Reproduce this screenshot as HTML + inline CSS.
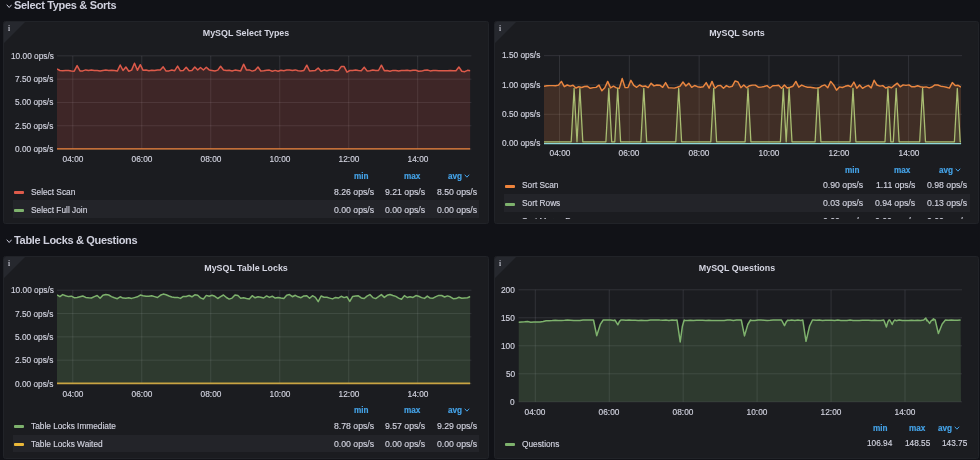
<!DOCTYPE html>
<html><head><meta charset="utf-8"><title>MySQL dashboard</title>
<style>
html,body{margin:0;padding:0}
body{width:980px;height:460px;background:#111217;overflow:hidden;position:relative;font-family:"Liberation Sans",Arial,sans-serif;color:#ccccdc}
.abs{position:absolute}
.t{position:absolute;white-space:nowrap;height:14px;line-height:14px;will-change:transform}
.panel{position:absolute;background:#1b1c20;border:1px solid #212328;border-radius:2.5px;box-sizing:border-box;overflow:hidden}
.corner{position:absolute;left:0;top:0;width:0;height:0;border-top:21.5px solid #26282e;border-right:21.5px solid transparent}
.ci{will-change:transform;position:absolute;left:4.3px;top:1.8px;font-family:"Liberation Serif",serif;font-weight:bold;font-size:7.6px;line-height:9px;color:#b9bac5}
.rtitle{font-size:11px;font-weight:bold;color:#d0d1de;letter-spacing:-0.32px}
.ptitle{font-size:8.9px;font-weight:bold;color:#d5d6e2}
.ax{font-size:8.3px;color:#d2d3df;-webkit-text-stroke:0.15px #d2d3df}
.lg{font-size:8.3px;color:#d2d3df;-webkit-text-stroke:0.15px #d2d3df}
.lv{font-size:8.7px;color:#d2d3df;-webkit-text-stroke:0.15px #d2d3df}
.lv2{font-size:8.25px;color:#d2d3df;-webkit-text-stroke:0.15px #d2d3df}
.lh{font-size:8.2px;font-weight:bold;color:#45a3e8;-webkit-text-stroke:0.15px #45a3e8}
</style></head><body>
<svg class="abs" style="left:5.6px;top:4.4px" width="6.4" height="4.5" viewBox="-1 -1 6.4 4.5"><path d="M0,0 L2.2,2.5 L4.4,0" fill="none" stroke="#ccccdc" stroke-width="1.0" stroke-linecap="round" stroke-linejoin="round"/></svg>
<div class="t rtitle" style="left:14.3px;top:-2.00px;">Select Types &amp; Sorts</div>
<svg class="abs" style="left:5.6px;top:238.6px" width="6.4" height="4.5" viewBox="-1 -1 6.4 4.5"><path d="M0,0 L2.2,2.5 L4.4,0" fill="none" stroke="#ccccdc" stroke-width="1.0" stroke-linecap="round" stroke-linejoin="round"/></svg>
<div class="t rtitle" style="left:14.3px;top:233.00px;">Table Locks &amp; Questions</div>
<div class="panel" style="left:3px;top:21px;width:486px;height:202.5px">
<div class="corner"></div><div class="ci">i</div>
</div>
<div class="t ptitle" style="left:146.00px;width:200px;top:26.00px;text-align:center;">MySQL Select Types</div>
<svg class="abs" style="left:0;top:0" width="980" height="460" viewBox="0 0 980 460">
<line x1="57" x2="471.4" y1="55.85" y2="55.85" stroke="rgba(204,204,220,0.13)" stroke-width="1"/>
<line x1="57" x2="471.4" y1="79.15" y2="79.15" stroke="rgba(204,204,220,0.13)" stroke-width="1"/>
<line x1="57" x2="471.4" y1="102.45" y2="102.45" stroke="rgba(204,204,220,0.13)" stroke-width="1"/>
<line x1="57" x2="471.4" y1="125.75" y2="125.75" stroke="rgba(204,204,220,0.13)" stroke-width="1"/>
<line x1="57" x2="471.4" y1="149.05" y2="149.05" stroke="rgba(204,204,220,0.13)" stroke-width="1"/>
<line x1="72.80" x2="72.80" y1="55.85" y2="149.05" stroke="rgba(204,204,220,0.13)" stroke-width="1"/>
<line x1="141.78" x2="141.78" y1="55.85" y2="149.05" stroke="rgba(204,204,220,0.13)" stroke-width="1"/>
<line x1="210.76" x2="210.76" y1="55.85" y2="149.05" stroke="rgba(204,204,220,0.13)" stroke-width="1"/>
<line x1="279.74" x2="279.74" y1="55.85" y2="149.05" stroke="rgba(204,204,220,0.13)" stroke-width="1"/>
<line x1="348.72" x2="348.72" y1="55.85" y2="149.05" stroke="rgba(204,204,220,0.13)" stroke-width="1"/>
<line x1="417.70" x2="417.70" y1="55.85" y2="149.05" stroke="rgba(204,204,220,0.13)" stroke-width="1"/>
<clipPath id="c321"><rect x="57" y="53.85" width="413.4" height="97.20000000000002"/></clipPath><g clip-path="url(#c321)">
<path d="M57.0,68.9 L59.9,70.5 L62.7,70.7 L65.6,70.4 L68.5,70.4 L71.4,71.1 L74.2,71.2 L77.1,65.6 L80.0,70.9 L82.8,70.9 L85.7,69.9 L88.6,70.6 L91.4,70.1 L94.3,70.6 L97.2,70.4 L100.1,71.0 L102.9,70.4 L105.8,70.1 L108.7,70.5 L111.5,70.3 L114.4,70.4 L117.3,71.1 L120.2,65.0 L123.0,70.5 L125.9,67.0 L128.8,71.2 L131.6,70.1 L134.5,63.2 L137.4,70.3 L140.3,64.7 L143.1,70.3 L146.0,70.0 L148.9,70.7 L151.7,70.2 L154.6,70.6 L157.5,70.0 L160.3,70.1 L163.2,66.8 L166.1,71.1 L169.0,70.9 L171.8,70.0 L174.7,70.7 L177.6,66.1 L180.4,70.8 L183.3,70.6 L186.2,67.2 L189.1,70.8 L191.9,70.5 L194.8,67.0 L197.7,70.0 L200.5,67.5 L203.4,70.0 L206.3,67.2 L209.2,69.9 L212.0,70.4 L214.9,71.0 L217.8,70.1 L220.6,66.3 L223.5,70.0 L226.4,70.5 L229.2,70.3 L232.1,71.0 L235.0,70.1 L237.9,70.5 L240.7,70.9 L243.6,64.2 L246.5,70.1 L249.3,69.9 L252.2,71.1 L255.1,70.2 L258.0,67.0 L260.8,71.0 L263.7,70.8 L266.6,70.2 L269.4,70.1 L272.3,71.2 L275.2,70.4 L278.1,71.2 L280.9,70.3 L283.8,70.8 L286.7,70.1 L289.5,69.9 L292.4,70.6 L295.3,69.9 L298.1,70.8 L301.0,71.1 L303.9,70.4 L306.8,65.2 L309.6,71.0 L312.5,70.7 L315.4,70.4 L318.2,68.0 L321.1,71.2 L324.0,70.1 L326.9,70.8 L329.7,70.0 L332.6,70.1 L335.5,70.7 L338.3,70.6 L341.2,66.6 L344.1,66.6 L347.0,72.1 L349.8,70.5 L352.7,70.4 L355.6,70.0 L358.4,70.6 L361.3,70.7 L364.2,67.2 L367.0,70.9 L369.9,70.8 L372.8,70.0 L375.7,70.5 L378.5,70.5 L381.4,65.2 L384.3,70.7 L387.1,70.5 L390.0,71.2 L392.9,70.4 L395.8,70.4 L398.6,71.1 L401.5,70.4 L404.4,70.6 L407.2,70.3 L410.1,70.8 L413.0,70.3 L415.9,70.3 L418.7,71.2 L421.6,71.1 L424.5,70.3 L427.3,70.0 L430.2,70.9 L433.1,70.6 L435.9,70.5 L438.8,70.8 L441.7,70.8 L444.6,70.8 L447.4,70.7 L450.3,70.5 L453.2,70.8 L456.0,70.7 L458.9,67.0 L461.8,71.2 L464.7,71.7 L467.5,70.3 L470.4,70.8 L470.4,149.05 L57,149.05 Z" fill="#dd5a4a" fill-opacity="0.18" stroke="none"/>
<path d="M57.0,68.9 L59.9,70.5 L62.7,70.7 L65.6,70.4 L68.5,70.4 L71.4,71.1 L74.2,71.2 L77.1,65.6 L80.0,70.9 L82.8,70.9 L85.7,69.9 L88.6,70.6 L91.4,70.1 L94.3,70.6 L97.2,70.4 L100.1,71.0 L102.9,70.4 L105.8,70.1 L108.7,70.5 L111.5,70.3 L114.4,70.4 L117.3,71.1 L120.2,65.0 L123.0,70.5 L125.9,67.0 L128.8,71.2 L131.6,70.1 L134.5,63.2 L137.4,70.3 L140.3,64.7 L143.1,70.3 L146.0,70.0 L148.9,70.7 L151.7,70.2 L154.6,70.6 L157.5,70.0 L160.3,70.1 L163.2,66.8 L166.1,71.1 L169.0,70.9 L171.8,70.0 L174.7,70.7 L177.6,66.1 L180.4,70.8 L183.3,70.6 L186.2,67.2 L189.1,70.8 L191.9,70.5 L194.8,67.0 L197.7,70.0 L200.5,67.5 L203.4,70.0 L206.3,67.2 L209.2,69.9 L212.0,70.4 L214.9,71.0 L217.8,70.1 L220.6,66.3 L223.5,70.0 L226.4,70.5 L229.2,70.3 L232.1,71.0 L235.0,70.1 L237.9,70.5 L240.7,70.9 L243.6,64.2 L246.5,70.1 L249.3,69.9 L252.2,71.1 L255.1,70.2 L258.0,67.0 L260.8,71.0 L263.7,70.8 L266.6,70.2 L269.4,70.1 L272.3,71.2 L275.2,70.4 L278.1,71.2 L280.9,70.3 L283.8,70.8 L286.7,70.1 L289.5,69.9 L292.4,70.6 L295.3,69.9 L298.1,70.8 L301.0,71.1 L303.9,70.4 L306.8,65.2 L309.6,71.0 L312.5,70.7 L315.4,70.4 L318.2,68.0 L321.1,71.2 L324.0,70.1 L326.9,70.8 L329.7,70.0 L332.6,70.1 L335.5,70.7 L338.3,70.6 L341.2,66.6 L344.1,66.6 L347.0,72.1 L349.8,70.5 L352.7,70.4 L355.6,70.0 L358.4,70.6 L361.3,70.7 L364.2,67.2 L367.0,70.9 L369.9,70.8 L372.8,70.0 L375.7,70.5 L378.5,70.5 L381.4,65.2 L384.3,70.7 L387.1,70.5 L390.0,71.2 L392.9,70.4 L395.8,70.4 L398.6,71.1 L401.5,70.4 L404.4,70.6 L407.2,70.3 L410.1,70.8 L413.0,70.3 L415.9,70.3 L418.7,71.2 L421.6,71.1 L424.5,70.3 L427.3,70.0 L430.2,70.9 L433.1,70.6 L435.9,70.5 L438.8,70.8 L441.7,70.8 L444.6,70.8 L447.4,70.7 L450.3,70.5 L453.2,70.8 L456.0,70.7 L458.9,67.0 L461.8,71.2 L464.7,71.7 L467.5,70.3 L470.4,70.8" fill="none" stroke="#dd5a4a" stroke-width="1.5" stroke-linejoin="round"/>
<path d="M57.0,148.9 L59.9,148.9 L62.7,148.9 L65.6,148.9 L68.5,148.9 L71.4,148.9 L74.2,148.9 L77.1,148.9 L80.0,148.9 L82.8,148.9 L85.7,148.9 L88.6,148.9 L91.4,148.9 L94.3,148.9 L97.2,148.9 L100.1,148.9 L102.9,148.9 L105.8,148.9 L108.7,148.9 L111.5,148.9 L114.4,148.9 L117.3,148.9 L120.2,148.9 L123.0,148.9 L125.9,148.9 L128.8,148.9 L131.6,148.9 L134.5,148.9 L137.4,148.9 L140.3,148.9 L143.1,148.9 L146.0,148.9 L148.9,148.9 L151.7,148.9 L154.6,148.9 L157.5,148.9 L160.3,148.9 L163.2,148.9 L166.1,148.9 L169.0,148.9 L171.8,148.9 L174.7,148.9 L177.6,148.9 L180.4,148.9 L183.3,148.9 L186.2,148.9 L189.1,148.9 L191.9,148.9 L194.8,148.9 L197.7,148.9 L200.5,148.9 L203.4,148.9 L206.3,148.9 L209.2,148.9 L212.0,148.9 L214.9,148.9 L217.8,148.9 L220.6,148.9 L223.5,148.9 L226.4,148.9 L229.2,148.9 L232.1,148.9 L235.0,148.9 L237.9,148.9 L240.7,148.9 L243.6,148.9 L246.5,148.9 L249.3,148.9 L252.2,148.9 L255.1,148.9 L258.0,148.9 L260.8,148.9 L263.7,148.9 L266.6,148.9 L269.4,148.9 L272.3,148.9 L275.2,148.9 L278.1,148.9 L280.9,148.9 L283.8,148.9 L286.7,148.9 L289.5,148.9 L292.4,148.9 L295.3,148.9 L298.1,148.9 L301.0,148.9 L303.9,148.9 L306.8,148.9 L309.6,148.9 L312.5,148.9 L315.4,148.9 L318.2,148.9 L321.1,148.9 L324.0,148.9 L326.9,148.9 L329.7,148.9 L332.6,148.9 L335.5,148.9 L338.3,148.9 L341.2,148.9 L344.1,148.9 L347.0,148.9 L349.8,148.9 L352.7,148.9 L355.6,148.9 L358.4,148.9 L361.3,148.9 L364.2,148.9 L367.0,148.9 L369.9,148.9 L372.8,148.9 L375.7,148.9 L378.5,148.9 L381.4,148.9 L384.3,148.9 L387.1,148.9 L390.0,148.9 L392.9,148.9 L395.8,148.9 L398.6,148.9 L401.5,148.9 L404.4,148.9 L407.2,148.9 L410.1,148.9 L413.0,148.9 L415.9,148.9 L418.7,148.9 L421.6,148.9 L424.5,148.9 L427.3,148.9 L430.2,148.9 L433.1,148.9 L435.9,148.9 L438.8,148.9 L441.7,148.9 L444.6,148.9 L447.4,148.9 L450.3,148.9 L453.2,148.9 L456.0,148.9 L458.9,148.9 L461.8,148.9 L464.7,148.9 L467.5,148.9 L470.4,148.9" fill="none" stroke="#ef843c" stroke-width="1.4" stroke-linejoin="round"/>
</g></svg>
<div class="t ax" style="right:926.50px;top:49.00px;text-align:right;">10.00 ops/s</div>
<div class="t ax" style="right:926.50px;top:72.00px;text-align:right;">7.50 ops/s</div>
<div class="t ax" style="right:926.50px;top:95.00px;text-align:right;">5.00 ops/s</div>
<div class="t ax" style="right:926.50px;top:119.00px;text-align:right;">2.50 ops/s</div>
<div class="t ax" style="right:926.50px;top:142.00px;text-align:right;">0.00 ops/s</div>
<div class="t ax" style="left:-27.20px;width:200px;top:152.00px;text-align:center;">04:00</div>
<div class="t ax" style="left:41.78px;width:200px;top:152.00px;text-align:center;">06:00</div>
<div class="t ax" style="left:110.76px;width:200px;top:152.00px;text-align:center;">08:00</div>
<div class="t ax" style="left:179.74px;width:200px;top:152.00px;text-align:center;">10:00</div>
<div class="t ax" style="left:248.72px;width:200px;top:152.00px;text-align:center;">12:00</div>
<div class="t ax" style="left:317.70px;width:200px;top:152.00px;text-align:center;">14:00</div>
<div class="t lh" style="right:611.25px;top:170.00px;text-align:right;">min</div>
<div class="t lh" style="right:559.25px;top:170.00px;text-align:right;">max</div>
<div class="t lh" style="right:518.05px;top:170.00px;text-align:right;">avg</div>
<svg class="abs" style="left:463.75px;top:174.25px" width="5.9" height="4.2" viewBox="-1 -1 5.9 4.2"><path d="M0,0 L1.95,2.2 L3.9,0" fill="none" stroke="#45a3e8" stroke-width="1.0" stroke-linecap="round" stroke-linejoin="round"/></svg>
<div class="abs" style="left:14.3px;top:190.65px;width:9.6px;height:3px;border-radius:0.9px;background:#dd5a4a"></div>
<div class="t lg" style="left:30.9px;top:185.00px;">Select Scan</div>
<div class="t lv" style="right:606.20px;top:185.00px;text-align:right;">8.26 ops/s</div>
<div class="t lv" style="right:554.70px;top:185.00px;text-align:right;">9.21 ops/s</div>
<div class="t lv" style="right:502.70px;top:185.00px;text-align:right;">8.50 ops/s</div>
<div class="abs" style="left:13px;top:200.25px;width:466px;height:17.75px;background:#232429"></div>
<div class="abs" style="left:14.3px;top:208.65px;width:9.6px;height:3px;border-radius:0.9px;background:#7eb26d"></div>
<div class="t lg" style="left:30.9px;top:203.00px;">Select Full Join</div>
<div class="t lv" style="right:606.20px;top:203.00px;text-align:right;">0.00 ops/s</div>
<div class="t lv" style="right:554.70px;top:203.00px;text-align:right;">0.00 ops/s</div>
<div class="t lv" style="right:502.70px;top:203.00px;text-align:right;">0.00 ops/s</div>
<div class="panel" style="left:494px;top:21px;width:485px;height:202.5px">
<div class="corner"></div><div class="ci">i</div>
</div>
<div class="t ptitle" style="left:636.50px;width:200px;top:26.00px;text-align:center;">MySQL Sorts</div>
<svg class="abs" style="left:0;top:0" width="980" height="460" viewBox="0 0 980 460">
<line x1="544" x2="962" y1="55.65" y2="55.65" stroke="rgba(204,204,220,0.13)" stroke-width="1"/>
<line x1="544" x2="962" y1="84.97" y2="84.97" stroke="rgba(204,204,220,0.13)" stroke-width="1"/>
<line x1="544" x2="962" y1="114.28" y2="114.28" stroke="rgba(204,204,220,0.13)" stroke-width="1"/>
<line x1="544" x2="962" y1="143.60" y2="143.60" stroke="rgba(204,204,220,0.13)" stroke-width="1"/>
<line x1="559.50" x2="559.50" y1="55.65" y2="143.6" stroke="rgba(204,204,220,0.13)" stroke-width="1"/>
<line x1="629.32" x2="629.32" y1="55.65" y2="143.6" stroke="rgba(204,204,220,0.13)" stroke-width="1"/>
<line x1="699.14" x2="699.14" y1="55.65" y2="143.6" stroke="rgba(204,204,220,0.13)" stroke-width="1"/>
<line x1="768.96" x2="768.96" y1="55.65" y2="143.6" stroke="rgba(204,204,220,0.13)" stroke-width="1"/>
<line x1="838.78" x2="838.78" y1="55.65" y2="143.6" stroke="rgba(204,204,220,0.13)" stroke-width="1"/>
<line x1="908.60" x2="908.60" y1="55.65" y2="143.6" stroke="rgba(204,204,220,0.13)" stroke-width="1"/>
<clipPath id="c49421"><rect x="544" y="53.65" width="417" height="91.94999999999999"/></clipPath><g clip-path="url(#c49421)">
<path d="M544.0,86.2 L546.9,85.8 L549.8,85.6 L552.7,85.6 L555.6,85.8 L558.5,85.1 L561.4,81.4 L564.3,86.7 L567.2,85.0 L570.1,86.1 L573.0,85.2 L575.9,88.0 L578.8,86.7 L581.6,87.5 L584.5,86.5 L587.4,86.3 L590.3,88.3 L593.2,87.6 L596.1,87.4 L599.0,85.1 L601.9,90.8 L604.8,87.8 L607.7,81.4 L610.6,87.9 L613.5,86.2 L616.4,87.9 L619.3,88.4 L622.2,78.5 L625.1,87.6 L628.0,87.6 L630.9,80.3 L633.8,85.3 L636.7,87.3 L639.6,85.0 L642.5,86.5 L645.4,86.0 L648.2,87.6 L651.1,83.2 L654.0,85.9 L656.9,85.0 L659.8,85.2 L662.7,87.3 L665.6,82.6 L668.5,87.8 L671.4,87.9 L674.3,88.1 L677.2,87.3 L680.1,86.2 L683.0,82.0 L685.9,86.0 L688.8,83.2 L691.7,87.3 L694.6,85.5 L697.5,86.7 L700.4,87.3 L703.3,86.7 L706.2,82.6 L709.1,88.2 L712.0,81.4 L714.9,88.3 L717.8,85.7 L720.6,85.4 L723.5,88.3 L726.4,85.6 L729.3,87.1 L732.2,86.3 L735.1,80.9 L738.0,82.0 L740.9,87.7 L743.8,85.0 L746.7,87.7 L749.6,85.7 L752.5,85.1 L755.4,85.1 L758.3,87.2 L761.2,87.1 L764.1,86.5 L767.0,85.6 L769.9,88.0 L772.8,85.7 L775.7,85.6 L778.6,85.3 L781.5,88.2 L784.4,85.0 L787.2,88.0 L790.1,87.2 L793.0,86.2 L795.9,81.4 L798.8,87.2 L801.7,85.1 L804.6,86.4 L807.5,87.3 L810.4,87.3 L813.3,87.7 L816.2,88.1 L819.1,87.8 L822.0,85.9 L824.9,84.9 L827.8,87.8 L830.7,81.4 L833.6,84.9 L836.5,90.2 L839.4,86.9 L842.3,87.5 L845.2,86.3 L848.1,85.5 L851.0,86.8 L853.9,82.0 L856.8,88.2 L859.6,85.1 L862.5,88.3 L865.4,86.6 L868.3,85.4 L871.2,87.9 L874.1,80.3 L877.0,85.0 L879.9,86.1 L882.8,85.6 L885.7,88.0 L888.6,86.8 L891.5,87.8 L894.4,85.4 L897.3,83.2 L900.2,86.8 L903.1,84.9 L906.0,85.4 L908.9,84.9 L911.8,86.8 L914.7,86.7 L917.6,85.8 L920.5,86.7 L923.4,87.3 L926.2,86.9 L929.1,87.9 L932.0,87.0 L934.9,84.9 L937.8,85.0 L940.7,86.2 L943.6,86.6 L946.5,87.2 L949.4,88.1 L952.3,82.6 L955.2,85.6 L958.1,85.3 L961.0,87.1 L961,143.6 L544,143.6 Z" fill="#ea8640" fill-opacity="0.18" stroke="none"/>
<path d="M544.0,86.2 L546.9,85.8 L549.8,85.6 L552.7,85.6 L555.6,85.8 L558.5,85.1 L561.4,81.4 L564.3,86.7 L567.2,85.0 L570.1,86.1 L573.0,85.2 L575.9,88.0 L578.8,86.7 L581.6,87.5 L584.5,86.5 L587.4,86.3 L590.3,88.3 L593.2,87.6 L596.1,87.4 L599.0,85.1 L601.9,90.8 L604.8,87.8 L607.7,81.4 L610.6,87.9 L613.5,86.2 L616.4,87.9 L619.3,88.4 L622.2,78.5 L625.1,87.6 L628.0,87.6 L630.9,80.3 L633.8,85.3 L636.7,87.3 L639.6,85.0 L642.5,86.5 L645.4,86.0 L648.2,87.6 L651.1,83.2 L654.0,85.9 L656.9,85.0 L659.8,85.2 L662.7,87.3 L665.6,82.6 L668.5,87.8 L671.4,87.9 L674.3,88.1 L677.2,87.3 L680.1,86.2 L683.0,82.0 L685.9,86.0 L688.8,83.2 L691.7,87.3 L694.6,85.5 L697.5,86.7 L700.4,87.3 L703.3,86.7 L706.2,82.6 L709.1,88.2 L712.0,81.4 L714.9,88.3 L717.8,85.7 L720.6,85.4 L723.5,88.3 L726.4,85.6 L729.3,87.1 L732.2,86.3 L735.1,80.9 L738.0,82.0 L740.9,87.7 L743.8,85.0 L746.7,87.7 L749.6,85.7 L752.5,85.1 L755.4,85.1 L758.3,87.2 L761.2,87.1 L764.1,86.5 L767.0,85.6 L769.9,88.0 L772.8,85.7 L775.7,85.6 L778.6,85.3 L781.5,88.2 L784.4,85.0 L787.2,88.0 L790.1,87.2 L793.0,86.2 L795.9,81.4 L798.8,87.2 L801.7,85.1 L804.6,86.4 L807.5,87.3 L810.4,87.3 L813.3,87.7 L816.2,88.1 L819.1,87.8 L822.0,85.9 L824.9,84.9 L827.8,87.8 L830.7,81.4 L833.6,84.9 L836.5,90.2 L839.4,86.9 L842.3,87.5 L845.2,86.3 L848.1,85.5 L851.0,86.8 L853.9,82.0 L856.8,88.2 L859.6,85.1 L862.5,88.3 L865.4,86.6 L868.3,85.4 L871.2,87.9 L874.1,80.3 L877.0,85.0 L879.9,86.1 L882.8,85.6 L885.7,88.0 L888.6,86.8 L891.5,87.8 L894.4,85.4 L897.3,83.2 L900.2,86.8 L903.1,84.9 L906.0,85.4 L908.9,84.9 L911.8,86.8 L914.7,86.7 L917.6,85.8 L920.5,86.7 L923.4,87.3 L926.2,86.9 L929.1,87.9 L932.0,87.0 L934.9,84.9 L937.8,85.0 L940.7,86.2 L943.6,86.6 L946.5,87.2 L949.4,88.1 L952.3,82.6 L955.2,85.6 L958.1,85.3 L961.0,87.1" fill="none" stroke="#ea8640" stroke-width="1.45" stroke-linejoin="round"/>
<path d="M544.0,141.8 L571.2,141.8 L574.1,88.5 L577.0,141.8 L579.9,88.5 L582.8,141.8 L605.9,141.8 L608.8,88.5 L611.7,141.8 L614.8,141.8 L617.7,88.5 L620.6,141.8 L640.9,141.8 L643.8,88.5 L646.7,141.8 L675.8,141.8 L678.7,88.5 L681.6,141.8 L710.8,141.8 L713.7,88.5 L716.6,141.8 L745.1,141.8 L748.0,88.5 L750.9,141.8 L780.4,141.8 L783.3,88.5 L786.2,141.8 L786.2,141.8 L789.1,88.5 L792.0,141.8 L815.1,141.8 L818.0,88.5 L820.9,141.8 L850.1,141.8 L853.0,88.5 L855.9,141.8 L885.0,141.8 L887.9,88.5 L890.8,141.8 L893.3,141.8 L896.2,88.5 L899.1,141.8 L919.7,141.8 L922.6,88.5 L925.5,141.8 L954.4,141.8 L957.3,88.5 L960.2,141.8 L962.0,141.8 L961,143.6 L544,143.6 Z" fill="#a9bd72" fill-opacity="0.12" stroke="none"/>
<path d="M544.0,141.8 L571.2,141.8 L574.1,88.5 L577.0,141.8 L579.9,88.5 L582.8,141.8 L605.9,141.8 L608.8,88.5 L611.7,141.8 L614.8,141.8 L617.7,88.5 L620.6,141.8 L640.9,141.8 L643.8,88.5 L646.7,141.8 L675.8,141.8 L678.7,88.5 L681.6,141.8 L710.8,141.8 L713.7,88.5 L716.6,141.8 L745.1,141.8 L748.0,88.5 L750.9,141.8 L780.4,141.8 L783.3,88.5 L786.2,141.8 L786.2,141.8 L789.1,88.5 L792.0,141.8 L815.1,141.8 L818.0,88.5 L820.9,141.8 L850.1,141.8 L853.0,88.5 L855.9,141.8 L885.0,141.8 L887.9,88.5 L890.8,141.8 L893.3,141.8 L896.2,88.5 L899.1,141.8 L919.7,141.8 L922.6,88.5 L925.5,141.8 L954.4,141.8 L957.3,88.5 L960.2,141.8 L962.0,141.8" fill="none" stroke="#a9bd72" stroke-width="1.3" stroke-linejoin="round"/>
<path d="M544.0,143.6 L546.9,143.6 L549.8,143.6 L552.7,143.6 L555.6,143.6 L558.5,143.6 L561.4,143.6 L564.3,143.6 L567.2,143.6 L570.1,143.6 L573.0,143.6 L575.9,143.6 L578.8,143.6 L581.6,143.6 L584.5,143.6 L587.4,143.6 L590.3,143.6 L593.2,143.6 L596.1,143.6 L599.0,143.6 L601.9,143.6 L604.8,143.6 L607.7,143.6 L610.6,143.6 L613.5,143.6 L616.4,143.6 L619.3,143.6 L622.2,143.6 L625.1,143.6 L628.0,143.6 L630.9,143.6 L633.8,143.6 L636.7,143.6 L639.6,143.6 L642.5,143.6 L645.4,143.6 L648.2,143.6 L651.1,143.6 L654.0,143.6 L656.9,143.6 L659.8,143.6 L662.7,143.6 L665.6,143.6 L668.5,143.6 L671.4,143.6 L674.3,143.6 L677.2,143.6 L680.1,143.6 L683.0,143.6 L685.9,143.6 L688.8,143.6 L691.7,143.6 L694.6,143.6 L697.5,143.6 L700.4,143.6 L703.3,143.6 L706.2,143.6 L709.1,143.6 L712.0,143.6 L714.9,143.6 L717.8,143.6 L720.6,143.6 L723.5,143.6 L726.4,143.6 L729.3,143.6 L732.2,143.6 L735.1,143.6 L738.0,143.6 L740.9,143.6 L743.8,143.6 L746.7,143.6 L749.6,143.6 L752.5,143.6 L755.4,143.6 L758.3,143.6 L761.2,143.6 L764.1,143.6 L767.0,143.6 L769.9,143.6 L772.8,143.6 L775.7,143.6 L778.6,143.6 L781.5,143.6 L784.4,143.6 L787.2,143.6 L790.1,143.6 L793.0,143.6 L795.9,143.6 L798.8,143.6 L801.7,143.6 L804.6,143.6 L807.5,143.6 L810.4,143.6 L813.3,143.6 L816.2,143.6 L819.1,143.6 L822.0,143.6 L824.9,143.6 L827.8,143.6 L830.7,143.6 L833.6,143.6 L836.5,143.6 L839.4,143.6 L842.3,143.6 L845.2,143.6 L848.1,143.6 L851.0,143.6 L853.9,143.6 L856.8,143.6 L859.6,143.6 L862.5,143.6 L865.4,143.6 L868.3,143.6 L871.2,143.6 L874.1,143.6 L877.0,143.6 L879.9,143.6 L882.8,143.6 L885.7,143.6 L888.6,143.6 L891.5,143.6 L894.4,143.6 L897.3,143.6 L900.2,143.6 L903.1,143.6 L906.0,143.6 L908.9,143.6 L911.8,143.6 L914.7,143.6 L917.6,143.6 L920.5,143.6 L923.4,143.6 L926.2,143.6 L929.1,143.6 L932.0,143.6 L934.9,143.6 L937.8,143.6 L940.7,143.6 L943.6,143.6 L946.5,143.6 L949.4,143.6 L952.3,143.6 L955.2,143.6 L958.1,143.6 L961.0,143.6" fill="none" stroke="#8fd8d8" stroke-width="1.4" stroke-linejoin="round"/>
</g></svg>
<div class="t ax" style="right:439.50px;top:48.00px;text-align:right;">1.50 ops/s</div>
<div class="t ax" style="right:439.50px;top:78.00px;text-align:right;">1.00 ops/s</div>
<div class="t ax" style="right:439.50px;top:107.00px;text-align:right;">0.50 ops/s</div>
<div class="t ax" style="right:439.50px;top:136.00px;text-align:right;">0.00 ops/s</div>
<div class="t ax" style="left:459.50px;width:200px;top:146.00px;text-align:center;">04:00</div>
<div class="t ax" style="left:529.32px;width:200px;top:146.00px;text-align:center;">06:00</div>
<div class="t ax" style="left:599.14px;width:200px;top:146.00px;text-align:center;">08:00</div>
<div class="t ax" style="left:668.96px;width:200px;top:146.00px;text-align:center;">10:00</div>
<div class="t ax" style="left:738.78px;width:200px;top:146.00px;text-align:center;">12:00</div>
<div class="t ax" style="left:808.60px;width:200px;top:146.00px;text-align:center;">14:00</div>
<div class="abs" style="left:0;top:0;width:980px;height:219px;overflow:hidden">
<div class="t lh" style="right:120.25px;top:164.00px;text-align:right;">min</div>
<div class="t lh" style="right:69.25px;top:164.00px;text-align:right;">max</div>
<div class="t lh" style="right:26.80px;top:164.00px;text-align:right;">avg</div>
<svg class="abs" style="left:955.0px;top:168.0px" width="5.9" height="4.2" viewBox="-1 -1 5.9 4.2"><path d="M0,0 L1.95,2.2 L3.9,0" fill="none" stroke="#45a3e8" stroke-width="1.0" stroke-linecap="round" stroke-linejoin="round"/></svg>
<div class="abs" style="left:505.3px;top:184.65px;width:9.6px;height:3px;border-radius:0.9px;background:#ef843c"></div>
<div class="t lg" style="left:521.9px;top:178.00px;">Sort Scan</div>
<div class="t lv" style="right:116.50px;top:178.00px;text-align:right;">0.90 ops/s</div>
<div class="t lv" style="right:64.50px;top:178.00px;text-align:right;">1.11 ops/s</div>
<div class="t lv" style="right:12.70px;top:178.00px;text-align:right;">0.98 ops/s</div>
<div class="abs" style="left:504px;top:194.25px;width:466px;height:17.75px;background:#232429"></div>
<div class="abs" style="left:505.3px;top:202.65px;width:9.6px;height:3px;border-radius:0.9px;background:#7eb26d"></div>
<div class="t lg" style="left:521.9px;top:196.00px;">Sort Rows</div>
<div class="t lv" style="right:116.50px;top:196.00px;text-align:right;">0.03 ops/s</div>
<div class="t lv" style="right:64.50px;top:196.00px;text-align:right;">0.94 ops/s</div>
<div class="t lv" style="right:12.70px;top:196.00px;text-align:right;">0.13 ops/s</div>
<div class="abs" style="left:505.3px;top:220.65px;width:9.6px;height:3px;border-radius:0.9px;background:#eab839"></div>
<div class="t lg" style="left:521.9px;top:214.00px;">Sort Merge Passes</div>
<div class="t lv" style="right:116.50px;top:214.00px;text-align:right;">0.00 ops/s</div>
<div class="t lv" style="right:64.50px;top:214.00px;text-align:right;">0.00 ops/s</div>
<div class="t lv" style="right:12.70px;top:214.00px;text-align:right;">0.00 ops/s</div>
</div>
<div class="panel" style="left:3px;top:256px;width:486px;height:202.6px">
<div class="corner"></div><div class="ci">i</div>
</div>
<div class="t ptitle" style="left:146.00px;width:200px;top:261.00px;text-align:center;">MySQL Table Locks</div>
<svg class="abs" style="left:0;top:0" width="980" height="460" viewBox="0 0 980 460">
<line x1="57" x2="471.4" y1="290.20" y2="290.20" stroke="rgba(204,204,220,0.13)" stroke-width="1"/>
<line x1="57" x2="471.4" y1="313.52" y2="313.52" stroke="rgba(204,204,220,0.13)" stroke-width="1"/>
<line x1="57" x2="471.4" y1="336.85" y2="336.85" stroke="rgba(204,204,220,0.13)" stroke-width="1"/>
<line x1="57" x2="471.4" y1="360.18" y2="360.18" stroke="rgba(204,204,220,0.13)" stroke-width="1"/>
<line x1="57" x2="471.4" y1="383.50" y2="383.50" stroke="rgba(204,204,220,0.13)" stroke-width="1"/>
<line x1="72.80" x2="72.80" y1="290.2" y2="383.5" stroke="rgba(204,204,220,0.13)" stroke-width="1"/>
<line x1="141.78" x2="141.78" y1="290.2" y2="383.5" stroke="rgba(204,204,220,0.13)" stroke-width="1"/>
<line x1="210.76" x2="210.76" y1="290.2" y2="383.5" stroke="rgba(204,204,220,0.13)" stroke-width="1"/>
<line x1="279.74" x2="279.74" y1="290.2" y2="383.5" stroke="rgba(204,204,220,0.13)" stroke-width="1"/>
<line x1="348.72" x2="348.72" y1="290.2" y2="383.5" stroke="rgba(204,204,220,0.13)" stroke-width="1"/>
<line x1="417.70" x2="417.70" y1="290.2" y2="383.5" stroke="rgba(204,204,220,0.13)" stroke-width="1"/>
<clipPath id="c3256"><rect x="57" y="288.2" width="413.4" height="97.30000000000001"/></clipPath><g clip-path="url(#c3256)">
<path d="M57.0,294.9 L59.9,296.7 L62.7,294.6 L65.6,295.8 L68.5,296.6 L71.4,296.2 L74.2,297.7 L77.1,297.5 L80.0,296.7 L82.8,296.0 L85.7,297.4 L88.6,297.8 L91.4,298.0 L94.3,296.6 L97.2,295.5 L100.1,298.2 L102.9,295.2 L105.8,294.6 L108.7,295.0 L111.5,296.6 L114.4,297.8 L117.3,298.7 L120.2,296.8 L123.0,298.1 L125.9,298.2 L128.8,297.8 L131.6,298.4 L134.5,297.6 L137.4,296.8 L140.3,295.1 L143.1,295.8 L146.0,296.3 L148.9,296.2 L151.7,295.7 L154.6,296.6 L157.5,297.5 L160.3,295.3 L163.2,294.1 L166.1,294.7 L169.0,296.0 L171.8,297.0 L174.7,297.4 L177.6,297.4 L180.4,298.4 L183.3,296.4 L186.2,296.5 L189.1,295.5 L191.9,296.8 L194.8,294.8 L197.7,295.3 L200.5,297.9 L203.4,299.0 L206.3,295.4 L209.2,296.3 L212.0,295.3 L214.9,296.3 L217.8,298.5 L220.6,296.7 L223.5,295.0 L226.4,297.5 L229.2,299.1 L232.1,298.1 L235.0,295.0 L237.9,295.5 L240.7,298.2 L243.6,297.7 L246.5,298.4 L249.3,299.0 L252.2,295.7 L255.1,297.8 L258.0,296.7 L260.8,297.2 L263.7,298.0 L266.6,295.9 L269.4,297.4 L272.3,296.2 L275.2,298.1 L278.1,297.4 L280.9,298.1 L283.8,298.4 L286.7,295.2 L289.5,294.6 L292.4,296.7 L295.3,295.3 L298.1,296.8 L301.0,297.7 L303.9,295.9 L306.8,295.8 L309.6,298.3 L312.5,295.7 L315.4,297.3 L318.2,301.6 L321.1,296.0 L324.0,297.2 L326.9,297.3 L329.7,298.1 L332.6,298.9 L335.5,297.4 L338.3,298.1 L341.2,296.3 L344.1,297.6 L347.0,296.8 L349.8,301.4 L352.7,296.4 L355.6,296.1 L358.4,295.8 L361.3,297.9 L364.2,298.5 L367.0,296.2 L369.9,294.6 L372.8,297.6 L375.7,298.6 L378.5,296.7 L381.4,294.6 L384.3,297.4 L387.1,295.3 L390.0,294.5 L392.9,295.5 L395.8,296.4 L398.6,298.1 L401.5,299.3 L404.4,295.6 L407.2,297.5 L410.1,296.8 L413.0,297.4 L415.9,295.6 L418.7,296.3 L421.6,297.6 L424.5,298.4 L427.3,296.1 L430.2,298.1 L433.1,298.2 L435.9,296.6 L438.8,295.4 L441.7,295.5 L444.6,297.0 L447.4,295.9 L450.3,296.8 L453.2,298.7 L456.0,298.6 L458.9,297.3 L461.8,298.3 L464.7,298.0 L467.5,297.8 L470.4,296.5 L470.4,383.5 L57,383.5 Z" fill="#7eb26d" fill-opacity="0.2" stroke="none"/>
<path d="M57.0,294.9 L59.9,296.7 L62.7,294.6 L65.6,295.8 L68.5,296.6 L71.4,296.2 L74.2,297.7 L77.1,297.5 L80.0,296.7 L82.8,296.0 L85.7,297.4 L88.6,297.8 L91.4,298.0 L94.3,296.6 L97.2,295.5 L100.1,298.2 L102.9,295.2 L105.8,294.6 L108.7,295.0 L111.5,296.6 L114.4,297.8 L117.3,298.7 L120.2,296.8 L123.0,298.1 L125.9,298.2 L128.8,297.8 L131.6,298.4 L134.5,297.6 L137.4,296.8 L140.3,295.1 L143.1,295.8 L146.0,296.3 L148.9,296.2 L151.7,295.7 L154.6,296.6 L157.5,297.5 L160.3,295.3 L163.2,294.1 L166.1,294.7 L169.0,296.0 L171.8,297.0 L174.7,297.4 L177.6,297.4 L180.4,298.4 L183.3,296.4 L186.2,296.5 L189.1,295.5 L191.9,296.8 L194.8,294.8 L197.7,295.3 L200.5,297.9 L203.4,299.0 L206.3,295.4 L209.2,296.3 L212.0,295.3 L214.9,296.3 L217.8,298.5 L220.6,296.7 L223.5,295.0 L226.4,297.5 L229.2,299.1 L232.1,298.1 L235.0,295.0 L237.9,295.5 L240.7,298.2 L243.6,297.7 L246.5,298.4 L249.3,299.0 L252.2,295.7 L255.1,297.8 L258.0,296.7 L260.8,297.2 L263.7,298.0 L266.6,295.9 L269.4,297.4 L272.3,296.2 L275.2,298.1 L278.1,297.4 L280.9,298.1 L283.8,298.4 L286.7,295.2 L289.5,294.6 L292.4,296.7 L295.3,295.3 L298.1,296.8 L301.0,297.7 L303.9,295.9 L306.8,295.8 L309.6,298.3 L312.5,295.7 L315.4,297.3 L318.2,301.6 L321.1,296.0 L324.0,297.2 L326.9,297.3 L329.7,298.1 L332.6,298.9 L335.5,297.4 L338.3,298.1 L341.2,296.3 L344.1,297.6 L347.0,296.8 L349.8,301.4 L352.7,296.4 L355.6,296.1 L358.4,295.8 L361.3,297.9 L364.2,298.5 L367.0,296.2 L369.9,294.6 L372.8,297.6 L375.7,298.6 L378.5,296.7 L381.4,294.6 L384.3,297.4 L387.1,295.3 L390.0,294.5 L392.9,295.5 L395.8,296.4 L398.6,298.1 L401.5,299.3 L404.4,295.6 L407.2,297.5 L410.1,296.8 L413.0,297.4 L415.9,295.6 L418.7,296.3 L421.6,297.6 L424.5,298.4 L427.3,296.1 L430.2,298.1 L433.1,298.2 L435.9,296.6 L438.8,295.4 L441.7,295.5 L444.6,297.0 L447.4,295.9 L450.3,296.8 L453.2,298.7 L456.0,298.6 L458.9,297.3 L461.8,298.3 L464.7,298.0 L467.5,297.8 L470.4,296.5" fill="none" stroke="#7eb26d" stroke-width="1.5" stroke-linejoin="round"/>
<path d="M57.0,383.4 L59.9,383.4 L62.7,383.4 L65.6,383.4 L68.5,383.4 L71.4,383.4 L74.2,383.4 L77.1,383.4 L80.0,383.4 L82.8,383.4 L85.7,383.4 L88.6,383.4 L91.4,383.4 L94.3,383.4 L97.2,383.4 L100.1,383.4 L102.9,383.4 L105.8,383.4 L108.7,383.4 L111.5,383.4 L114.4,383.4 L117.3,383.4 L120.2,383.4 L123.0,383.4 L125.9,383.4 L128.8,383.4 L131.6,383.4 L134.5,383.4 L137.4,383.4 L140.3,383.4 L143.1,383.4 L146.0,383.4 L148.9,383.4 L151.7,383.4 L154.6,383.4 L157.5,383.4 L160.3,383.4 L163.2,383.4 L166.1,383.4 L169.0,383.4 L171.8,383.4 L174.7,383.4 L177.6,383.4 L180.4,383.4 L183.3,383.4 L186.2,383.4 L189.1,383.4 L191.9,383.4 L194.8,383.4 L197.7,383.4 L200.5,383.4 L203.4,383.4 L206.3,383.4 L209.2,383.4 L212.0,383.4 L214.9,383.4 L217.8,383.4 L220.6,383.4 L223.5,383.4 L226.4,383.4 L229.2,383.4 L232.1,383.4 L235.0,383.4 L237.9,383.4 L240.7,383.4 L243.6,383.4 L246.5,383.4 L249.3,383.4 L252.2,383.4 L255.1,383.4 L258.0,383.4 L260.8,383.4 L263.7,383.4 L266.6,383.4 L269.4,383.4 L272.3,383.4 L275.2,383.4 L278.1,383.4 L280.9,383.4 L283.8,383.4 L286.7,383.4 L289.5,383.4 L292.4,383.4 L295.3,383.4 L298.1,383.4 L301.0,383.4 L303.9,383.4 L306.8,383.4 L309.6,383.4 L312.5,383.4 L315.4,383.4 L318.2,383.4 L321.1,383.4 L324.0,383.4 L326.9,383.4 L329.7,383.4 L332.6,383.4 L335.5,383.4 L338.3,383.4 L341.2,383.4 L344.1,383.4 L347.0,383.4 L349.8,383.4 L352.7,383.4 L355.6,383.4 L358.4,383.4 L361.3,383.4 L364.2,383.4 L367.0,383.4 L369.9,383.4 L372.8,383.4 L375.7,383.4 L378.5,383.4 L381.4,383.4 L384.3,383.4 L387.1,383.4 L390.0,383.4 L392.9,383.4 L395.8,383.4 L398.6,383.4 L401.5,383.4 L404.4,383.4 L407.2,383.4 L410.1,383.4 L413.0,383.4 L415.9,383.4 L418.7,383.4 L421.6,383.4 L424.5,383.4 L427.3,383.4 L430.2,383.4 L433.1,383.4 L435.9,383.4 L438.8,383.4 L441.7,383.4 L444.6,383.4 L447.4,383.4 L450.3,383.4 L453.2,383.4 L456.0,383.4 L458.9,383.4 L461.8,383.4 L464.7,383.4 L467.5,383.4 L470.4,383.4" fill="none" stroke="#c9a443" stroke-width="1.8" stroke-linejoin="round"/>
</g></svg>
<div class="t ax" style="right:926.50px;top:283.00px;text-align:right;">10.00 ops/s</div>
<div class="t ax" style="right:926.50px;top:307.00px;text-align:right;">7.50 ops/s</div>
<div class="t ax" style="right:926.50px;top:330.00px;text-align:right;">5.00 ops/s</div>
<div class="t ax" style="right:926.50px;top:353.00px;text-align:right;">2.50 ops/s</div>
<div class="t ax" style="right:926.50px;top:377.00px;text-align:right;">0.00 ops/s</div>
<div class="t ax" style="left:-27.20px;width:200px;top:387.00px;text-align:center;">04:00</div>
<div class="t ax" style="left:41.78px;width:200px;top:387.00px;text-align:center;">06:00</div>
<div class="t ax" style="left:110.76px;width:200px;top:387.00px;text-align:center;">08:00</div>
<div class="t ax" style="left:179.74px;width:200px;top:387.00px;text-align:center;">10:00</div>
<div class="t ax" style="left:248.72px;width:200px;top:387.00px;text-align:center;">12:00</div>
<div class="t ax" style="left:317.70px;width:200px;top:387.00px;text-align:center;">14:00</div>
<div class="t lh" style="right:611.25px;top:404.00px;text-align:right;">min</div>
<div class="t lh" style="right:559.25px;top:404.00px;text-align:right;">max</div>
<div class="t lh" style="right:518.05px;top:404.00px;text-align:right;">avg</div>
<svg class="abs" style="left:463.75px;top:408.1px" width="5.9" height="4.2" viewBox="-1 -1 5.9 4.2"><path d="M0,0 L1.95,2.2 L3.9,0" fill="none" stroke="#45a3e8" stroke-width="1.0" stroke-linecap="round" stroke-linejoin="round"/></svg>
<div class="abs" style="left:14.3px;top:425.00px;width:9.6px;height:3px;border-radius:0.9px;background:#7eb26d"></div>
<div class="t lg" style="left:30.9px;top:419.00px;">Table Locks Immediate</div>
<div class="t lv" style="right:606.20px;top:419.00px;text-align:right;">8.78 ops/s</div>
<div class="t lv" style="right:554.70px;top:419.00px;text-align:right;">9.57 ops/s</div>
<div class="t lv" style="right:502.70px;top:419.00px;text-align:right;">9.29 ops/s</div>
<div class="abs" style="left:13px;top:434.60px;width:466px;height:17.75px;background:#232429"></div>
<div class="abs" style="left:14.3px;top:443.00px;width:9.6px;height:3px;border-radius:0.9px;background:#eab839"></div>
<div class="t lg" style="left:30.9px;top:437.00px;">Table Locks Waited</div>
<div class="t lv" style="right:606.20px;top:437.00px;text-align:right;">0.00 ops/s</div>
<div class="t lv" style="right:554.70px;top:437.00px;text-align:right;">0.00 ops/s</div>
<div class="t lv" style="right:502.70px;top:437.00px;text-align:right;">0.00 ops/s</div>
<div class="panel" style="left:494px;top:256px;width:485px;height:202.6px">
<div class="corner"></div><div class="ci">i</div>
</div>
<div class="t ptitle" style="left:636.50px;width:200px;top:261.00px;text-align:center;">MySQL Questions</div>
<svg class="abs" style="left:0;top:0" width="980" height="460" viewBox="0 0 980 460">
<line x1="518.5" x2="962" y1="289.80" y2="289.80" stroke="rgba(204,204,220,0.13)" stroke-width="1"/>
<line x1="518.5" x2="962" y1="317.80" y2="317.80" stroke="rgba(204,204,220,0.13)" stroke-width="1"/>
<line x1="518.5" x2="962" y1="345.80" y2="345.80" stroke="rgba(204,204,220,0.13)" stroke-width="1"/>
<line x1="518.5" x2="962" y1="373.80" y2="373.80" stroke="rgba(204,204,220,0.13)" stroke-width="1"/>
<line x1="518.5" x2="962" y1="401.80" y2="401.80" stroke="rgba(204,204,220,0.13)" stroke-width="1"/>
<line x1="535.30" x2="535.30" y1="289.8" y2="401.8" stroke="rgba(204,204,220,0.13)" stroke-width="1"/>
<line x1="609.24" x2="609.24" y1="289.8" y2="401.8" stroke="rgba(204,204,220,0.13)" stroke-width="1"/>
<line x1="683.18" x2="683.18" y1="289.8" y2="401.8" stroke="rgba(204,204,220,0.13)" stroke-width="1"/>
<line x1="757.12" x2="757.12" y1="289.8" y2="401.8" stroke="rgba(204,204,220,0.13)" stroke-width="1"/>
<line x1="831.06" x2="831.06" y1="289.8" y2="401.8" stroke="rgba(204,204,220,0.13)" stroke-width="1"/>
<line x1="905.00" x2="905.00" y1="289.8" y2="401.8" stroke="rgba(204,204,220,0.13)" stroke-width="1"/>
<clipPath id="c494256"><rect x="518.5" y="287.8" width="442.5" height="116.0"/></clipPath><g clip-path="url(#c494256)">
<path d="M518.5,322.3 L521.6,321.9 L524.6,321.8 L527.7,321.6 L530.8,322.2 L533.9,322.1 L536.9,322.1 L540.0,322.0 L543.1,321.5 L546.1,320.7 L549.2,320.7 L552.3,320.6 L555.3,320.2 L558.4,320.5 L561.5,320.4 L564.6,320.3 L567.6,320.0 L570.7,320.2 L573.8,320.6 L576.8,320.4 L579.9,320.5 L583.0,320.0 L586.0,320.0 L589.1,320.0 L592.2,320.0 L593.5,320.0 L596.7,335.7 L600.3,324.4 L603.2,320.0 L604.5,320.1 L607.5,319.9 L610.6,320.0 L613.7,320.5 L614.9,320.0 L617.9,324.8 L619.5,321.4 L620.9,320.0 L622.9,320.0 L626.0,320.3 L629.0,320.1 L632.1,320.2 L635.2,320.3 L638.2,320.4 L641.3,320.3 L644.4,320.4 L647.4,320.6 L650.5,320.0 L653.6,320.0 L656.7,319.9 L659.7,320.1 L662.8,320.2 L665.9,320.1 L668.9,320.6 L672.0,320.1 L675.1,320.3 L677.0,320.0 L680.2,341.9 L682.4,326.2 L684.2,320.0 L684.3,320.5 L687.4,320.5 L690.4,320.2 L693.5,320.5 L696.6,320.3 L699.6,320.2 L702.7,320.3 L705.8,320.6 L708.8,320.3 L711.9,320.5 L715.0,320.5 L718.1,320.5 L721.1,320.4 L724.2,320.6 L727.3,320.1 L730.3,319.9 L733.4,320.4 L736.5,320.1 L739.5,319.9 L741.3,320.0 L744.5,335.9 L747.8,324.5 L750.5,320.0 L751.8,320.6 L754.9,320.5 L758.0,320.0 L761.0,320.0 L764.1,320.2 L767.2,320.5 L770.2,320.3 L773.3,320.0 L776.4,320.0 L779.5,320.0 L781.5,320.0 L784.5,325.6 L786.4,321.6 L788.0,320.0 L788.7,320.5 L791.7,320.0 L794.8,320.4 L797.9,320.1 L800.9,320.5 L802.8,320.0 L806.0,341.3 L809.6,326.0 L812.5,320.0 L813.2,319.9 L816.3,320.2 L819.4,320.1 L822.4,320.5 L825.5,320.2 L828.6,320.2 L831.6,320.2 L834.7,320.4 L837.8,320.1 L840.9,320.4 L843.9,320.4 L847.0,320.5 L850.1,320.1 L853.1,320.6 L856.2,320.5 L859.3,320.6 L862.3,320.2 L865.4,320.2 L868.5,320.2 L871.6,320.6 L874.6,320.3 L877.7,320.4 L880.8,320.6 L883.8,320.0 L886.4,327.0 L887.8,322.0 L889.0,320.0 L889.8,320.0 L892.2,324.5 L893.6,321.3 L894.8,320.0 L896.1,320.7 L899.2,319.9 L902.3,320.6 L905.3,320.4 L908.4,320.4 L911.5,320.2 L914.5,320.6 L917.6,320.3 L920.7,320.4 L923.7,320.0 L925.8,318.1 L926.8,320.7 L927.1,320.0 L929.6,323.4 L931.0,321.0 L932.1,320.0 L933.0,320.4 L933.3,318.8 L935.2,320.0 L938.4,333.6 L942.2,323.9 L945.4,320.0 L948.3,320.3 L951.4,319.9 L954.4,320.3 L957.5,320.3 L960.6,320.1 L961,401.8 L518.5,401.8 Z" fill="#7eb26d" fill-opacity="0.2" stroke="none"/>
<path d="M518.5,322.3 L521.6,321.9 L524.6,321.8 L527.7,321.6 L530.8,322.2 L533.9,322.1 L536.9,322.1 L540.0,322.0 L543.1,321.5 L546.1,320.7 L549.2,320.7 L552.3,320.6 L555.3,320.2 L558.4,320.5 L561.5,320.4 L564.6,320.3 L567.6,320.0 L570.7,320.2 L573.8,320.6 L576.8,320.4 L579.9,320.5 L583.0,320.0 L586.0,320.0 L589.1,320.0 L592.2,320.0 L593.5,320.0 L596.7,335.7 L600.3,324.4 L603.2,320.0 L604.5,320.1 L607.5,319.9 L610.6,320.0 L613.7,320.5 L614.9,320.0 L617.9,324.8 L619.5,321.4 L620.9,320.0 L622.9,320.0 L626.0,320.3 L629.0,320.1 L632.1,320.2 L635.2,320.3 L638.2,320.4 L641.3,320.3 L644.4,320.4 L647.4,320.6 L650.5,320.0 L653.6,320.0 L656.7,319.9 L659.7,320.1 L662.8,320.2 L665.9,320.1 L668.9,320.6 L672.0,320.1 L675.1,320.3 L677.0,320.0 L680.2,341.9 L682.4,326.2 L684.2,320.0 L684.3,320.5 L687.4,320.5 L690.4,320.2 L693.5,320.5 L696.6,320.3 L699.6,320.2 L702.7,320.3 L705.8,320.6 L708.8,320.3 L711.9,320.5 L715.0,320.5 L718.1,320.5 L721.1,320.4 L724.2,320.6 L727.3,320.1 L730.3,319.9 L733.4,320.4 L736.5,320.1 L739.5,319.9 L741.3,320.0 L744.5,335.9 L747.8,324.5 L750.5,320.0 L751.8,320.6 L754.9,320.5 L758.0,320.0 L761.0,320.0 L764.1,320.2 L767.2,320.5 L770.2,320.3 L773.3,320.0 L776.4,320.0 L779.5,320.0 L781.5,320.0 L784.5,325.6 L786.4,321.6 L788.0,320.0 L788.7,320.5 L791.7,320.0 L794.8,320.4 L797.9,320.1 L800.9,320.5 L802.8,320.0 L806.0,341.3 L809.6,326.0 L812.5,320.0 L813.2,319.9 L816.3,320.2 L819.4,320.1 L822.4,320.5 L825.5,320.2 L828.6,320.2 L831.6,320.2 L834.7,320.4 L837.8,320.1 L840.9,320.4 L843.9,320.4 L847.0,320.5 L850.1,320.1 L853.1,320.6 L856.2,320.5 L859.3,320.6 L862.3,320.2 L865.4,320.2 L868.5,320.2 L871.6,320.6 L874.6,320.3 L877.7,320.4 L880.8,320.6 L883.8,320.0 L886.4,327.0 L887.8,322.0 L889.0,320.0 L889.8,320.0 L892.2,324.5 L893.6,321.3 L894.8,320.0 L896.1,320.7 L899.2,319.9 L902.3,320.6 L905.3,320.4 L908.4,320.4 L911.5,320.2 L914.5,320.6 L917.6,320.3 L920.7,320.4 L923.7,320.0 L925.8,318.1 L926.8,320.7 L927.1,320.0 L929.6,323.4 L931.0,321.0 L932.1,320.0 L933.0,320.4 L933.3,318.8 L935.2,320.0 L938.4,333.6 L942.2,323.9 L945.4,320.0 L948.3,320.3 L951.4,319.9 L954.4,320.3 L957.5,320.3 L960.6,320.1" fill="none" stroke="#7eb26d" stroke-width="1.5" stroke-linejoin="round"/>
</g></svg>
<div class="t ax" style="right:465.00px;top:283.00px;text-align:right;">200</div>
<div class="t ax" style="right:465.00px;top:311.00px;text-align:right;">150</div>
<div class="t ax" style="right:465.00px;top:339.00px;text-align:right;">100</div>
<div class="t ax" style="right:465.00px;top:367.00px;text-align:right;">50</div>
<div class="t ax" style="right:465.00px;top:395.00px;text-align:right;">0</div>
<div class="t ax" style="left:435.30px;width:200px;top:405.00px;text-align:center;">04:00</div>
<div class="t ax" style="left:509.24px;width:200px;top:405.00px;text-align:center;">06:00</div>
<div class="t ax" style="left:583.18px;width:200px;top:405.00px;text-align:center;">08:00</div>
<div class="t ax" style="left:657.12px;width:200px;top:405.00px;text-align:center;">10:00</div>
<div class="t ax" style="left:731.06px;width:200px;top:405.00px;text-align:center;">12:00</div>
<div class="t ax" style="left:805.00px;width:200px;top:405.00px;text-align:center;">14:00</div>
<div class="t lh" style="right:92.05px;top:422.00px;text-align:right;">min</div>
<div class="t lh" style="right:54.75px;top:422.00px;text-align:right;">max</div>
<div class="t lh" style="right:27.60px;top:422.00px;text-align:right;">avg</div>
<svg class="abs" style="left:954.2px;top:426.0px" width="5.9" height="4.2" viewBox="-1 -1 5.9 4.2"><path d="M0,0 L1.95,2.2 L3.9,0" fill="none" stroke="#45a3e8" stroke-width="1.0" stroke-linecap="round" stroke-linejoin="round"/></svg>
<div class="abs" style="left:505.3px;top:443.40px;width:9.6px;height:3px;border-radius:0.9px;background:#7eb26d"></div>
<div class="t lg" style="left:521.9px;top:437.00px;">Questions</div>
<div class="t lv2" style="right:87.70px;top:437.00px;text-align:right;">106.94</div>
<div class="t lv2" style="right:50.20px;top:437.00px;text-align:right;">148.55</div>
<div class="t lv2" style="right:12.40px;top:437.00px;text-align:right;">143.75</div>
</body></html>
